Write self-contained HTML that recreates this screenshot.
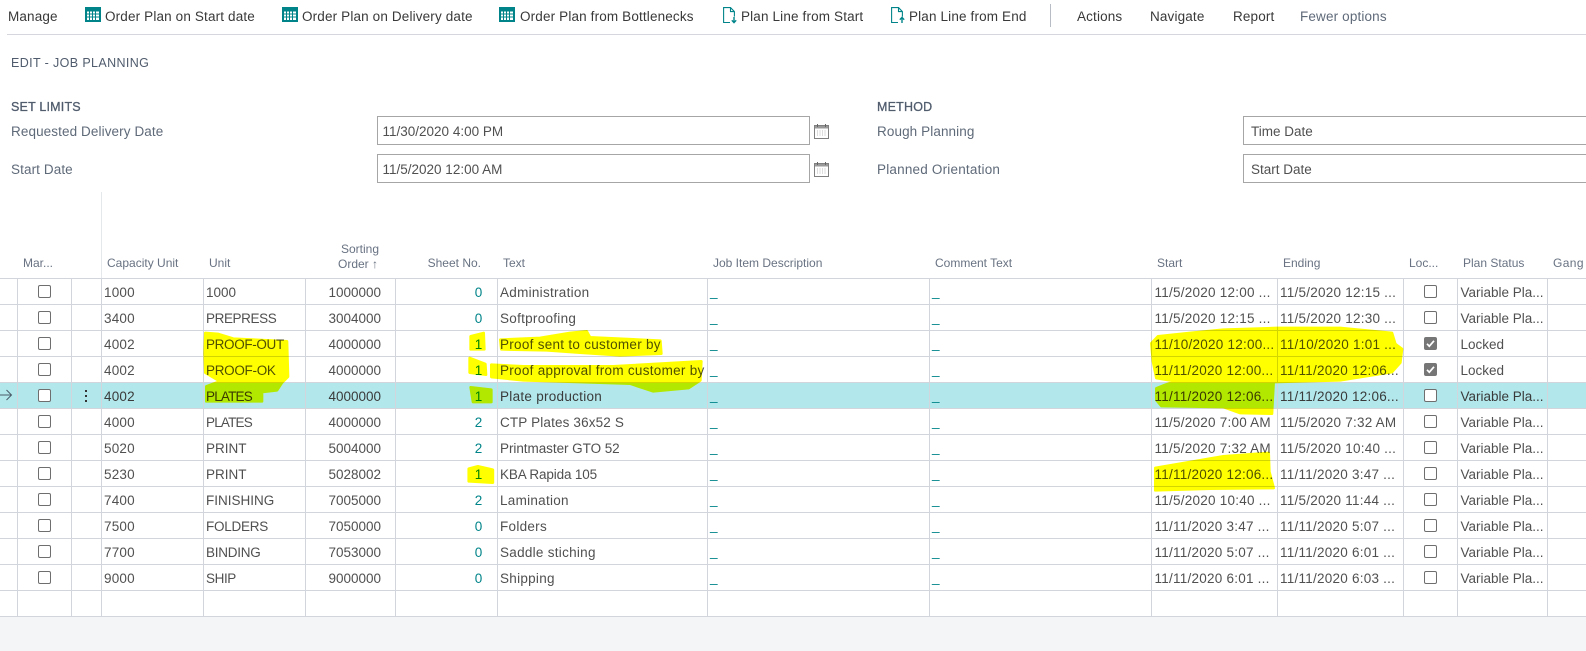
<!DOCTYPE html>
<html><head><meta charset="utf-8"><title>Edit - Job Planning</title>
<style>
html,body{margin:0;padding:0;background:#fff}
#p{position:relative;width:1586px;height:651px;overflow:hidden;background:#fff;font-family:"Liberation Sans",sans-serif;font-size:13.5px;color:#505050}
#p div,#p span{position:absolute;white-space:nowrap}
#p svg{position:absolute}
.tb{top:8px;line-height:18px;color:#393939;letter-spacing:.15px}
.h{top:254px;line-height:18px;font-size:12px;color:#687282}
.sec{font-size:12.5px;color:#505c6d;line-height:16px;letter-spacing:.38px;top:55px}
.st{font-size:12.5px;color:#505c6d;line-height:16px;letter-spacing:.2px;-webkit-text-stroke:.3px #505c6d}
.lb{color:#5f6a79;line-height:18px;letter-spacing:.1px}
.in{border:1px solid #a6a6a6;box-sizing:border-box;height:29px;line-height:29px;padding-left:4.500px;color:#505050;background:#fff}
.hl{left:0;width:1586px;height:1px;background:#d3d5dc}
.vl{top:278px;width:1px;height:338px;background:#d3d5dc}
.r{left:0;width:1586px;height:26px;line-height:29px;letter-spacing:.2px}
.a{left:104px}.b{left:206px;letter-spacing:0}.c{left:280px;width:101px;text-align:right;letter-spacing:0}
.d{left:400px;width:82.5px;text-align:right;color:#008489}
.e{left:500px;letter-spacing:.28px}.f{left:710px;color:#008489;line-height:27px}.g{left:932px;color:#008489;line-height:27px}
.s{left:1154.5px;letter-spacing:.24px}.t{left:1280px;letter-spacing:.24px}.u{left:1460.5px;letter-spacing:0}
.k{top:7px;width:13px;height:13px;box-sizing:border-box;border:1px solid #6e6e6e;border-radius:2px;background:#fff}
.m{left:38px}.l{left:1424px}
.ck{background:#767676;border-color:#767676}
</style></head><body>
<div id="p">
<div style="left:0;top:616px;width:1586px;height:35px;background:#f4f5f7"></div>
<div style="left:0;top:382px;width:1586px;height:26px;background:#b2e8ec"></div>

<div class="tb" style="left:8px">Manage</div>
<svg style="left:85px;top:7px" width="16" height="15" viewBox="0 0 16 15"><rect width="16" height="15" fill="#008489"/><path d="M2 4.500h2v2H2zM5 4.500h2v2H5zM8 4.500h2v2H8zM11 4.500h3v2h-3zM2 7.500h2v2H2zM5 7.500h2v2H5zM8 7.500h2v2H8zM11 7.500h3v2h-3zM2 10.500h2v2.500H2zM5 10.500h2v2.500H5zM8 10.500h2v2.500H8zM11 10.500h3v2.500h-3z" fill="#fff"/></svg>
<div class="tb" style="left:105px">Order Plan on Start date</div>
<svg style="left:282px;top:7px" width="16" height="15" viewBox="0 0 16 15"><rect width="16" height="15" fill="#008489"/><path d="M2 4.500h2v2H2zM5 4.500h2v2H5zM8 4.500h2v2H8zM11 4.500h3v2h-3zM2 7.500h2v2H2zM5 7.500h2v2H5zM8 7.500h2v2H8zM11 7.500h3v2h-3zM2 10.500h2v2.500H2zM5 10.500h2v2.500H5zM8 10.500h2v2.500H8zM11 10.500h3v2.500h-3z" fill="#fff"/></svg>
<div class="tb" style="left:302px">Order Plan on Delivery date</div>
<svg style="left:499px;top:7px" width="16" height="15" viewBox="0 0 16 15"><rect width="16" height="15" fill="#008489"/><path d="M2 4.500h2v2H2zM5 4.500h2v2H5zM8 4.500h2v2H8zM11 4.500h3v2h-3zM2 7.500h2v2H2zM5 7.500h2v2H5zM8 7.500h2v2H8zM11 7.500h3v2h-3zM2 10.500h2v2.500H2zM5 10.500h2v2.500H5zM8 10.500h2v2.500H8zM11 10.500h3v2.500h-3z" fill="#fff"/></svg>
<div class="tb" style="left:520px">Order Plan from Bottlenecks</div>
<svg style="left:723px;top:7px" width="15" height="17" viewBox="0 0 15 17" fill="none" stroke="#008489" stroke-width="1.100"><path d="M7 15.500H.6V.6h6.900l3.900 4v5M7.500.6v4h3.900"/><path d="M11 10v5.500M8.800 13.300l2.200 2.300 2.200-2.300" stroke-width="1.400"/></svg>
<div class="tb" style="left:741px">Plan Line from Start</div>
<svg style="left:891px;top:7px" width="15" height="17" viewBox="0 0 15 17" fill="none" stroke="#008489" stroke-width="1.100"><path d="M7 15.500H.6V.6h6.900l3.900 4v5M7.500.6v4h3.900"/><path d="M11 16v-5.500M8.800 12.700l2.200-2.300 2.200 2.300" stroke-width="1.400"/></svg>
<div class="tb" style="left:909px">Plan Line from End</div>
<div style="left:1050px;top:4px;width:1px;height:23px;background:#b8bcc4"></div>
<div class="tb" style="left:1077px">Actions</div>
<div class="tb" style="left:1150px">Navigate</div>
<div class="tb" style="left:1233px">Report</div>
<div class="tb" style="left:1300px;color:#5f6a79">Fewer options</div>
<div style="left:7px;top:34px;width:1579px;height:1px;background:#d6d7de"></div>

<div class="sec" style="left:11px">EDIT - JOB PLANNING</div>
<div class="st" style="left:11px;top:99px">SET LIMITS</div>
<div class="st" style="left:877px;top:99px">METHOD</div>
<div class="lb" style="left:11px;top:123px">Requested Delivery Date</div>
<div class="lb" style="left:11px;top:161px">Start Date</div>
<div class="lb" style="left:877px;top:123px">Rough Planning</div>
<div class="lb" style="left:877px;top:161px;letter-spacing:.2px">Planned Orientation</div>
<div class="in" style="left:377px;top:116px;width:433px">11/30/2020 4:00 PM</div>
<div class="in" style="left:377px;top:154px;width:433px">11/5/2020 12:00 AM</div>
<div class="in" style="left:1243px;top:116px;width:360px;padding-left:7px">Time Date</div>
<div class="in" style="left:1243px;top:154px;width:360px;padding-left:7px">Start Date</div>
<svg style="left:814px;top:124px" width="15" height="15" viewBox="0 0 15 15"><rect x=".5" y="1.500" width="14" height="13" fill="#fff" stroke="#808080"/><rect x="1" y="2" width="13" height="2.500" fill="#9a9a9a"/><path d="M3.500 0v3M11.500 0v3" stroke="#666"/><path d="M3 7h1M5.500 7h1M8 7h1M10.500 7h1M3 9h1M5.500 9h1M8 9h1M10.500 9h1M3 11h1M5.500 11h1M8 11h1M10.500 11h1" stroke="#bbb"/></svg>
<svg style="left:814px;top:162px" width="15" height="15" viewBox="0 0 15 15"><rect x=".5" y="1.500" width="14" height="13" fill="#fff" stroke="#808080"/><rect x="1" y="2" width="13" height="2.500" fill="#9a9a9a"/><path d="M3.500 0v3M11.500 0v3" stroke="#666"/><path d="M3 7h1M5.500 7h1M8 7h1M10.500 7h1M3 9h1M5.500 9h1M8 9h1M10.500 9h1M3 11h1M5.500 11h1M8 11h1M10.500 11h1" stroke="#bbb"/></svg>

<div style="left:101px;top:192px;width:1px;height:86px;background:#e6e7eb"></div>
<div class="h" style="left:23px">Mar...</div>
<div class="h" style="left:107px">Capacity Unit</div>
<div class="h" style="left:209px">Unit</div>
<div class="h" style="left:300px;width:79px;text-align:right;top:240px">Sorting</div>
<div class="h" style="left:300px;width:78px;text-align:right;top:255px">Order ↑</div>
<div class="h" style="left:400px;width:81px;text-align:right">Sheet No.</div>
<div class="h" style="left:503px">Text</div>
<div class="h" style="left:713px">Job Item Description</div>
<div class="h" style="left:935px">Comment Text</div>
<div class="h" style="left:1157px">Start</div>
<div class="h" style="left:1283px">Ending</div>
<div class="h" style="left:1409px">Loc...</div>
<div class="h" style="left:1463px">Plan Status</div>
<div class="h" style="left:1553px;letter-spacing:.4px">Gang ...</div>

<div class="hl" style="top:278px"></div><div class="hl" style="top:304px"></div><div class="hl" style="top:330px"></div><div class="hl" style="top:356px"></div><div class="hl" style="top:382px"></div><div class="hl" style="top:408px"></div><div class="hl" style="top:434px"></div><div class="hl" style="top:460px"></div><div class="hl" style="top:486px"></div><div class="hl" style="top:512px"></div><div class="hl" style="top:538px"></div><div class="hl" style="top:564px"></div><div class="hl" style="top:590px"></div><div class="hl" style="top:616px"></div>
<div class="vl" style="left:17px"></div><div class="vl" style="left:71px"></div><div class="vl" style="left:101px"></div><div class="vl" style="left:203px"></div><div class="vl" style="left:305px"></div><div class="vl" style="left:395px"></div><div class="vl" style="left:497px"></div><div class="vl" style="left:707px"></div><div class="vl" style="left:929px"></div><div class="vl" style="left:1151px"></div><div class="vl" style="left:1277px"></div><div class="vl" style="left:1403px"></div><div class="vl" style="left:1457px"></div><div class="vl" style="left:1547px"></div>

<div class="r" style="top:278px"><span class="k m"></span><span class="a">1000</span><span class="b">1000</span><span class="c">1000000</span><span class="d">0</span><span class="e">Administration</span><span class="f">_</span><span class="g">_</span><span class="s">11/5/2020 12:00 ...</span><span class="t">11/5/2020 12:15 ...</span><span class="k l"></span><span class="u">Variable Pla...</span></div>
<div class="r" style="top:304px"><span class="k m"></span><span class="a">3400</span><span class="b" style="letter-spacing:-.4px">PREPRESS</span><span class="c">3004000</span><span class="d">0</span><span class="e">Softproofing</span><span class="f">_</span><span class="g">_</span><span class="s">11/5/2020 12:15 ...</span><span class="t">11/5/2020 12:30 ...</span><span class="k l"></span><span class="u">Variable Pla...</span></div>
<div class="r" style="top:330px"><span class="k m"></span><span class="a">4002</span><span class="b" style="letter-spacing:-.35px">PROOF-OUT</span><span class="c">4000000</span><span class="d">1</span><span class="e">Proof sent to customer by</span><span class="f">_</span><span class="g">_</span><span class="s">11/10/2020 12:00...</span><span class="t">11/10/2020 1:01 ...</span><span class="k l ck"><svg style="left:1px;top:1px" width="9" height="9" viewBox="0 0 9 9"><path d="M1 4.800l2.300 2.400L8 1.800" fill="none" stroke="#fff" stroke-width="1.700"/></svg></span><span class="u">Locked</span></div>
<div class="r" style="top:356px"><span class="k m"></span><span class="a">4002</span><span class="b" style="letter-spacing:-.3px">PROOF-OK</span><span class="c">4000000</span><span class="d">1</span><span class="e">Proof approval from customer by</span><span class="f">_</span><span class="g">_</span><span class="s">11/11/2020 12:00...</span><span class="t">11/11/2020 12:06...</span><span class="k l ck"><svg style="left:1px;top:1px" width="9" height="9" viewBox="0 0 9 9"><path d="M1 4.800l2.300 2.400L8 1.800" fill="none" stroke="#fff" stroke-width="1.700"/></svg></span><span class="u">Locked</span></div>
<div class="r" style="top:382px;color:#3a3a3a"><svg style="left:0;top:6px" width="13" height="14" viewBox="0 0 13 14" fill="none" stroke="#4a5a68"><path d="M0 7h11.500M6.500 2l5 5-5 5"/></svg><span class="k m"></span><span style="left:85px;top:8px;width:2px;height:2px;background:#333"></span><span style="left:85px;top:13px;width:2px;height:2px;background:#333"></span><span style="left:85px;top:18px;width:2px;height:2px;background:#333"></span><span class="a">4002</span><span class="b" style="letter-spacing:-.8px">PLATES</span><span class="c">4000000</span><span class="d">1</span><span class="e">Plate production</span><span class="f">_</span><span class="g">_</span><span class="s">11/11/2020 12:06...</span><span class="t">11/11/2020 12:06...</span><span class="k l"></span><span class="u">Variable Pla...</span></div>
<div class="r" style="top:408px"><span class="k m"></span><span class="a">4000</span><span class="b" style="letter-spacing:-.8px">PLATES</span><span class="c">4000000</span><span class="d">2</span><span class="e" style="letter-spacing:.15px">CTP Plates 36x52 S</span><span class="f">_</span><span class="g">_</span><span class="s">11/5/2020 7:00 AM</span><span class="t">11/5/2020 7:32 AM</span><span class="k l"></span><span class="u">Variable Pla...</span></div>
<div class="r" style="top:434px"><span class="k m"></span><span class="a">5020</span><span class="b">PRINT</span><span class="c">5004000</span><span class="d">2</span><span class="e" style="letter-spacing:-.05px">Printmaster GTO 52</span><span class="f">_</span><span class="g">_</span><span class="s">11/5/2020 7:32 AM</span><span class="t">11/5/2020 10:40 ...</span><span class="k l"></span><span class="u">Variable Pla...</span></div>
<div class="r" style="top:460px"><span class="k m"></span><span class="a">5230</span><span class="b">PRINT</span><span class="c">5028002</span><span class="d">1</span><span class="e" style="letter-spacing:-.15px">KBA Rapida 105</span><span class="f">_</span><span class="g">_</span><span class="s">11/11/2020 12:06...</span><span class="t">11/11/2020 3:47 ...</span><span class="k l"></span><span class="u">Variable Pla...</span></div>
<div class="r" style="top:486px"><span class="k m"></span><span class="a">7400</span><span class="b">FINISHING</span><span class="c">7005000</span><span class="d">2</span><span class="e">Lamination</span><span class="f">_</span><span class="g">_</span><span class="s">11/5/2020 10:40 ...</span><span class="t">11/5/2020 11:44 ...</span><span class="k l"></span><span class="u">Variable Pla...</span></div>
<div class="r" style="top:512px"><span class="k m"></span><span class="a">7500</span><span class="b" style="letter-spacing:-.25px">FOLDERS</span><span class="c">7050000</span><span class="d">0</span><span class="e">Folders</span><span class="f">_</span><span class="g">_</span><span class="s">11/11/2020 3:47 ...</span><span class="t">11/11/2020 5:07 ...</span><span class="k l"></span><span class="u">Variable Pla...</span></div>
<div class="r" style="top:538px"><span class="k m"></span><span class="a">7700</span><span class="b" style="letter-spacing:-.25px">BINDING</span><span class="c">7053000</span><span class="d">0</span><span class="e">Saddle stiching</span><span class="f">_</span><span class="g">_</span><span class="s">11/11/2020 5:07 ...</span><span class="t">11/11/2020 6:01 ...</span><span class="k l"></span><span class="u">Variable Pla...</span></div>
<div class="r" style="top:564px"><span class="k m"></span><span class="a">9000</span><span class="b" style="letter-spacing:-.4px">SHIP</span><span class="c">9000000</span><span class="d">0</span><span class="e">Shipping</span><span class="f">_</span><span class="g">_</span><span class="s">11/11/2020 6:01 ...</span><span class="t">11/11/2020 6:03 ...</span><span class="k l"></span><span class="u">Variable Pla...</span></div>

<svg style="left:0;top:0;mix-blend-mode:multiply;pointer-events:none" width="1586" height="651" viewBox="0 0 1586 651" fill="#ffff00" stroke="#ffff00" stroke-linejoin="round">
<g transform="translate(0,230) scale(.33333)" stroke-width="8">
<path d="M616 309L655 312L700 326L861 334L864 440L846 458L831 481L786 486L786 514L619 514L619 469L660 454L616 428L614 370Z"/>
<path d="M1412 319L1451 309L1453 358L1412 358Z"/>
<path d="M1409 384L1456 402L1458 434L1409 428Z"/>
<path d="M1412 472L1474 479L1474 516L1419 516Z"/>
</g>
<g transform="translate(480,230) scale(.33333)" stroke-width="8">
<path d="M61 329L180 324L270 309L320 304L330 322L541 332L544 371L420 376L300 368L200 361L64 358Z"/>
<path d="M34 404L130 409L400 409L664 394L661 451L626 474L520 484L450 461L300 456L130 451L34 441Z"/>
</g>
<g transform="translate(1140,320) scale(.33333)" stroke-width="8">
<path d="M34 70L54 49L150 39L250 29L410 24L600 24L756 39L766 72L786 87L781 128L756 156L600 181L401 186L398 240L396 281L300 279L250 261L64 258L49 240L49 205L74 195L106 184L49 174L39 125Z"/>
</g>
<g transform="translate(1100,430) scale(.33333)" stroke-width="8">
<path d="M166 114L370 79L506 69L508 125L521 174L330 176L166 181Z"/>
</g>
<g transform="translate(0,430) scale(.44643,.33333)" stroke-width="8">
<path d="M1051 116L1070 109L1103 119L1103 158L1051 154Z"/>
</g>
</svg>
</div>
</body></html>
